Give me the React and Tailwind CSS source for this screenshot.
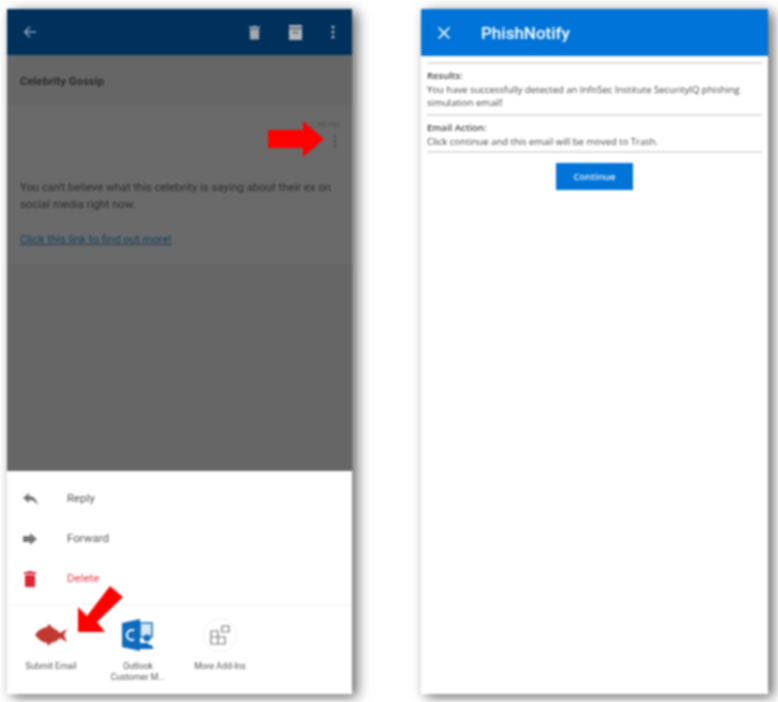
import { X } from 'lucide-react';

const fuente = { fontFamily: 'Roboto, sans-serif' };
const fuenteAviso = { fontFamily: '"Open Sans", sans-serif' };

function FlechaDerecha() {
  return (
    <svg className="absolute left-[261px] top-[66px]" width="56" height="36" viewBox="0 0 56 36">
      <path d="M0 9 H35 V0 L56 18 L35 36 V27 H0 Z" fill="#ff0000" />
    </svg>
  );
}

function FlechaDiagonal() {
  return (
    <svg className="absolute left-[71px] top-[115px]" width="46" height="47" viewBox="0 0 46 47">
      <path d="M0 46 V21 L9 30 L32 0 L45 11 L19 36 L27 46 Z" fill="#ff0000" />
    </svg>
  );
}

function BarraCorreo() {
  return (
    <div className="flex h-[46px] items-center justify-between bg-[#00305c] pl-[16px] pr-[17px]">
      <svg width="14" height="14" viewBox="0 0 16 16" fill="none" stroke="#8fa3b6" strokeWidth="1.8">
        <path d="M15 8 H2 M8 2 L2 8 L8 14" />
      </svg>
      <div className="flex items-center gap-[28px]">
        <svg width="11" height="15" viewBox="0 0 12 15" fill="#a5a9ad">
          <path d="M0 1 H4 L4.5 0 H7.5 L8 1 H12 V3 H0 Z M1 4 H11 V15 H1 Z" />
        </svg>
        <svg width="15" height="15" viewBox="0 0 16 16" fill="#b3b6b9">
          <path d="M1 0 H15 V3 H1 Z M1 4 H15 V16 H1 Z" />
          <path d="M5 7 H11 V9 H5 Z" fill="#5d6b78" />
        </svg>
        <svg width="4" height="14" viewBox="0 0 4 14" fill="#b3b6b9">
          <circle cx="2" cy="2" r="1.6" />
          <circle cx="2" cy="7" r="1.6" />
          <circle cx="2" cy="12" r="1.6" />
        </svg>
      </div>
    </div>
  );
}

function CuerpoCorreo() {
  return (
    <div className="relative flex-1 bg-[#666666] text-[#2b2b2b]">
      <div className="flex h-[51px] items-center border-b border-[#6b6b6b] pl-[13px] pt-[3px] text-[11.4px] font-bold">
        Celebrity Gossip
      </div>
      <div className="h-[158px] bg-[#6a6a6a] pl-[13px] pr-[12px]">
        <div className="pt-[13px] text-right text-[8px] text-[#505050]">1:50 PM</div>
        <div className="flex justify-end pr-[3px] pt-[4px]">
          <svg width="4" height="13" viewBox="0 0 4 13" fill="#484848">
            <circle cx="2" cy="2" r="1.3" />
            <circle cx="2" cy="6.5" r="1.3" />
            <circle cx="2" cy="11" r="1.3" />
          </svg>
        </div>
        <p className="mt-[31px] text-[11.3px] leading-[17px]">
          You can't believe what this celebrity is saying about their ex on social media right now.
        </p>
        <p className="mt-[18px] text-[11.3px] leading-[17px] text-[#14405f] underline">Click this link to find out more!</p>
      </div>
      <FlechaDerecha />
    </div>
  );
}

function FilaMenu({ icono, texto, color }) {
  return (
    <div className="flex h-[40px] items-center">
      <div className="flex w-[60px] justify-center pr-[14px]">{icono}</div>
      <span className={`text-[11.5px] ${color}`}>{texto}</span>
    </div>
  );
}

function Pez() {
  return (
    <svg width="34" height="22" viewBox="0 0 34 22">
      <path d="M1 11 C5 5 9 4 13 3 L15 0 L19 4 C22 5 24 7 26 9 L33 5 L30 11 L33 18 L26 14 C24 16 22 18 17 19 L14 22 L13 19 C8 18 4 15 1 11 Z" fill="#c0392f" />
    </svg>
  );
}

function IconoOutlook() {
  return (
    <svg width="32" height="32" viewBox="0 0 32 32">
      <path d="M0 4 L18 0 V32 L0 28 Z" fill="#0f6cbd" />
      <path d="M18 4 H30 V18 H18 Z" fill="#d7e6f3" stroke="#0f6cbd" strokeWidth="1.5" />
      <path d="M18 24 H26 V30 H18 Z" fill="#0f6cbd" />
      <circle cx="25" cy="19" r="3.5" fill="#0f6cbd" />
      <path d="M19 29 C19 24 31 24 31 29 V30 H19 Z" fill="#0f6cbd" />
      <path d="M12 11.5 A5 5 0 1 0 12 20.5" fill="none" stroke="#ffffff" strokeWidth="2" />
    </svg>
  );
}

function IconoAddIns() {
  return (
    <div className="flex h-[34px] w-[34px] items-center justify-center rounded-full border border-[#f0f0f0]">
      <svg width="20" height="20" viewBox="0 0 20 20" fill="none" stroke="#777777" strokeWidth="1.2">
        <path d="M1 6 H8 V12 H1 Z M1 12 H8 V19 H1 Z M8 12 H15 V19 H8 Z" />
        <path d="M12 1 H19 V7 H12 Z" />
      </svg>
    </div>
  );
}

function AccesoAddIn({ icono, texto, ancho }) {
  return (
    <div className={`flex flex-col items-center ${ancho}`}>
      <div className="flex h-[34px] items-center justify-center">{icono}</div>
      <span className="mt-[9px] whitespace-nowrap text-center text-[8.7px] leading-[11px] text-[#555555]">{texto}</span>
    </div>
  );
}

function MenuInferior() {
  return (
    <div className="relative h-[223px] bg-white">
      <div className="h-[134px] border-b border-[#f0f0f0] pt-[8px]">
        <FilaMenu
          texto="Reply"
          color="text-[#555555]"
          icono={
            <svg width="15" height="12" viewBox="0 0 15 12" fill="#777777">
              <path d="M6 0 L0 5 L6 10 V7 C9 7 12 8 15 12 C14 7 11 3 6 3 Z" />
            </svg>
          }
        />
        <FilaMenu
          texto="Forward"
          color="text-[#555555]"
          icono={
            <svg width="14" height="12" viewBox="0 0 14 12" fill="#777777">
              <path d="M0 3 H7 V0 L14 6 L7 12 V9 H0 Z" />
            </svg>
          }
        />
        <FilaMenu
          texto="Delete"
          color="text-[#e5424d]"
          icono={
            <svg width="12" height="16" viewBox="0 0 12 16" fill="#dc2434">
              <path d="M0 1 H4 L4.5 0 H7.5 L8 1 H12 V3 H0 Z M1 4 H11 V16 H1 Z" />
            </svg>
          }
        />
      </div>
      <div className="flex pl-[14px] pt-[13px]">
        <AccesoAddIn icono={<Pez />} texto="Submit Email" ancho="w-[60px]" />
        <AccesoAddIn icono={<IconoOutlook />} texto={<>Outlook<br />Customer M...</>} ancho="ml-[27px] w-[60px]" />
        <AccesoAddIn icono={<IconoAddIns />} texto="More Add-Ins" ancho="ml-[22px] w-[60px]" />
      </div>
      <FlechaDiagonal />
    </div>
  );
}

function PanelPhish() {
  return (
    <div className="flex h-[685px] w-[347px] flex-col bg-white shadow-[5px_3px_12px_rgba(0,0,0,0.6)]">
      <div className="flex h-[47px] items-center bg-[#0074d9] pl-[13px] text-white">
        <X size={20} strokeWidth={2} />
        <span className="ml-[27px] pt-[2px] text-[17px] font-medium" style={fuente}>PhishNotify</span>
      </div>
      <div className="px-[6px] pt-[6px] text-[9.5px] leading-[13.5px] text-[#444444]" style={fuenteAviso}>
        <div className="h-[52px] border-t-2 border-[#dddddd] pt-[5px]">
          <div className="font-semibold">Results:</div>
          <div>You have successfully detected an InfoSec Institute SecurityIQ phishing simulation email!</div>
        </div>
        <div className="h-[37px] border-t-2 border-[#dddddd] pt-[5px]">
          <div className="font-semibold">Email Action:</div>
          <div>Click continue and this email will be moved to Trash.</div>
        </div>
        <div className="flex justify-center border-t-2 border-[#dddddd] pt-[10px]">
          <button className="h-[27px] w-[77px] bg-[#0074d9] text-[9.6px] font-semibold text-[#e8f2fb]">Continue</button>
        </div>
      </div>
    </div>
  );
}

export default function App() {
  return (
    <div className="flex h-[702px] w-[778px] gap-[69px] overflow-hidden bg-white pl-[7px] pt-[9px] blur-[0.8px]" style={fuente}>
      <div className="flex h-[685px] w-[345px] flex-col shadow-[5px_3px_12px_rgba(0,0,0,0.6)]">
        <BarraCorreo />
        <CuerpoCorreo />
        <MenuInferior />
      </div>
      <PanelPhish />
    </div>
  );
}
